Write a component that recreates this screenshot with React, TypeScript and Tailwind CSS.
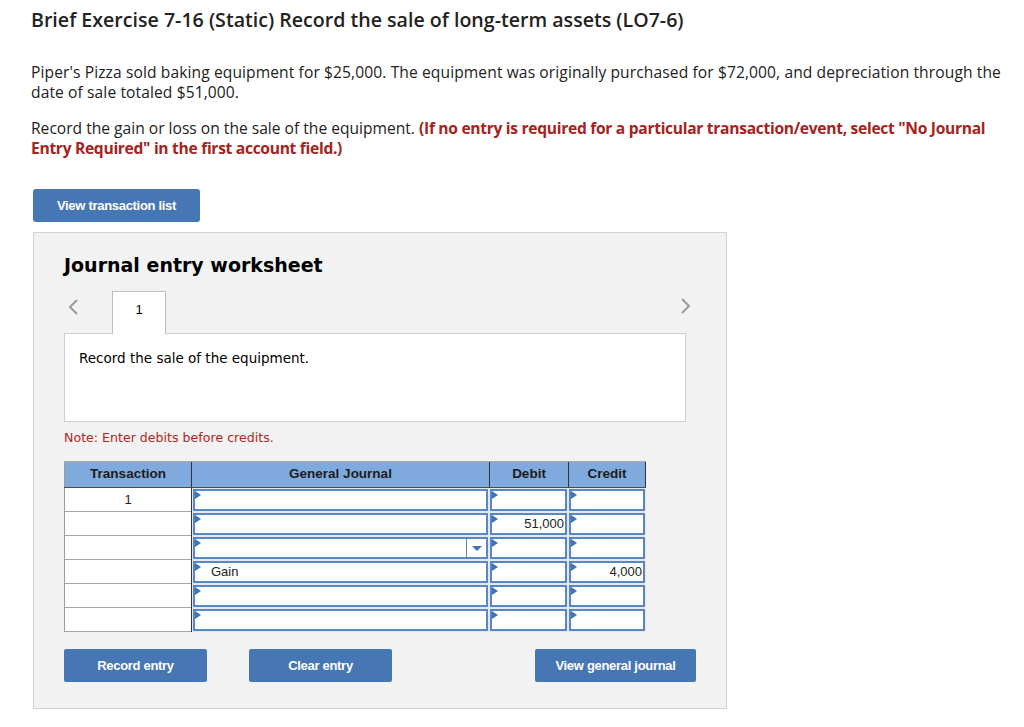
import React from 'react';

const blue = 'bg-[#4776b4]';

type Row = { txn?: string; account?: string; debit?: string; credit?: string; dropdown?: boolean };

const rows: Row[] = [
  { txn: '1' },
  { debit: '51,000' },
  { dropdown: true },
  { account: 'Gain', credit: '4,000' },
  {},
  {},
];

const Marker = () => (
  <span className="absolute left-0 top-0 w-0 h-0 border-y-[4px] border-y-transparent border-l-[6px] border-l-[#3f72b8]" />
);

const InputCell = ({ value, align = 'right', dropdown, width }: { value?: string; align?: 'left' | 'right'; dropdown?: boolean; width: string }) => (
  <div className={`${width} h-full bg-[#e4e9f0] p-px`}>
    <div className="relative h-full bg-white border-2 border-[#5a86c2] flex items-center">
      <Marker />
      <span
        className={
          align === 'left'
            ? 'flex-1 pl-[16px] text-[13px] text-[#222]'
            : 'flex-1 text-right pr-[1px] text-[13px] text-[#222]'
        }
      >
        {value}
      </span>
      {dropdown && (
        <div className="w-[20px] h-full border-l border-[#5a86c2] flex items-center justify-center">
          <span className="w-0 h-0 border-x-[5px] border-x-transparent border-t-[5px] border-t-[#3f72b8]" />
        </div>
      )}
    </div>
  </div>
);

const ActionButton = ({ label, width }: { label: string; width: string }) => (
  <button
    className={`${blue} ${width} block h-[33px] rounded-[2px] text-white text-[13px] font-bold tracking-[-0.3px] font-['Liberation_Sans',Arial,sans-serif]`}
  >
    {label}
  </button>
);

export default function App() {
  return (
    <div className="min-h-[727px] bg-white font-['Open_Sans',sans-serif] text-[#222]">
      <div className="pl-[31px] pt-[7px] pr-[10px]">
        <h1 className="text-[19.6px] leading-[26px] font-semibold text-[#222]">
          Brief Exercise 7-16 (Static) Record the sale of long-term assets (LO7-6)
        </h1>

        <p className="mt-[29px] text-[15.6px] leading-[20px] tracking-[0.1px]">
          Piper's Pizza sold baking equipment for $25,000. The equipment was originally purchased for $72,000, and depreciation through the
          <br />
          date of sale totaled $51,000.
        </p>

        <p className="mt-[16px] text-[15.6px] leading-[20px]">
          Record the gain or loss on the sale of the equipment.{' '}
          <span className="font-bold text-[#a5231c] tracking-[-0.3px]">
            (If no entry is required for a particular transaction/event, select "No Journal
            <br />
            Entry Required" in the first account field.)
          </span>
        </p>

        <button
          className={`${blue} block mt-[31px] ml-[2px] w-[167px] h-[33px] rounded-[3px] text-white text-[13px] font-bold tracking-[-0.3px] font-['Liberation_Sans',Arial,sans-serif]`}
        >
          View transaction list
        </button>

        {/* worksheet panel */}
        <div className="mt-[10px] ml-[2px] w-[694px] h-[477px] bg-[#f2f2f2] border border-[#d2d2d2] pl-[30px] font-['DejaVu_Sans',Verdana,sans-serif]">
          <h2 className="mt-[20px] text-[19px] leading-[24px] font-bold text-black">
            Journal entry worksheet
          </h2>

          {/* tabs */}
          <div className="mt-[14px] h-[42px] w-[628px] flex">
            <div className="w-[48px] pt-[7px] pl-[3px]">
              <svg width="12" height="18" viewBox="0 0 12 18" fill="none">
                <path d="M10 2 L3 9 L10 16" stroke="#9a9a9a" strokeWidth="2" />
              </svg>
            </div>
            <div className="w-[54px] h-[43px] bg-white border border-b-0 border-[#bdbdbd] flex justify-center pt-[8px] text-[13px] text-black font-['Liberation_Sans',Arial,sans-serif] relative z-10">
              1
            </div>
            <div className="flex-1" />
            <div className="pt-[6px]">
              <svg width="12" height="18" viewBox="0 0 12 18" fill="none">
                <path d="M2 2 L9 9 L2 16" stroke="#9a9a9a" strokeWidth="2" />
              </svg>
            </div>
          </div>

          <div className="w-[622px] h-[89px] bg-white border border-[#cfcfcf] px-[14px] pt-[14px] text-[13.5px] text-black">
            Record the sale of the equipment.
          </div>

          <div className="mt-[8px] text-[12.6px] leading-[16px] text-[#b1261f]">
            Note: Enter debits before credits.
          </div>

          {/* journal table */}
          <div className="mt-[15px] w-[582px] font-['Liberation_Sans',Arial,sans-serif]">
            <div className="flex h-[27px] bg-[#80aadd] border-t border-[#a9a9a9] border-b border-b-[#4a4a4a] text-[13.5px] font-bold text-[#1c1c1c]">
              <div className="w-[127px] flex items-center justify-center border-l border-[#9a9a9a]">Transaction</div>
              <div className="w-[298px] flex items-center justify-center border-l border-[#333]">General Journal</div>
              <div className="w-[79px] flex items-center justify-center border-l border-[#333]">Debit</div>
              <div className="w-[78px] flex items-center justify-center border-x border-[#333]">Credit</div>
            </div>
            <div className="flex flex-col">
              {rows.map((r, i) => (
                <div key={i} className="flex h-[24px]">
                  <div className="w-[127px] h-[24px] bg-white border-l border-l-[#9a9a9a] border-b border-b-[#a4a4a4] flex items-center justify-center text-[13px] text-[#222]">
                    {r.txn}
                  </div>
                  <div className="w-[298px] h-[24px] border-l border-[#333] flex">
                    <InputCell value={r.account} align="left" dropdown={r.dropdown} width="w-[297px]" />
                  </div>
                  <InputCell value={r.debit} width="w-[79px]" />
                  <InputCell value={r.credit} width="w-[78px]" />
                </div>
              ))}
            </div>
          </div>

          <div className="mt-[17px] flex w-[632px]">
            <ActionButton label="Record entry" width="w-[143px]" />
            <div className="w-[42px]" />
            <ActionButton label="Clear entry" width="w-[143px]" />
            <div className="flex-1" />
            <ActionButton label="View general journal" width="w-[161px]" />
          </div>
        </div>
      </div>
    </div>
  );
}
